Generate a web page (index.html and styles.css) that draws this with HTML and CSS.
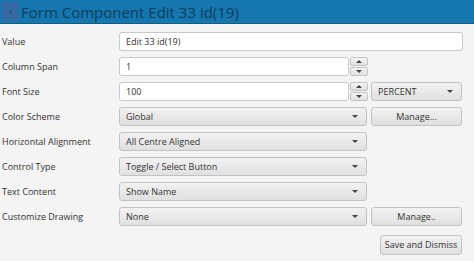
FILE: index.html
```html
<!DOCTYPE html>
<html>
<head>
<meta charset="utf-8">
<link rel="stylesheet" href="styles.css">
</head>
<body>
<div class="header">
  <div class="back">&lsaquo;</div>
  <div class="title">Form Component Edit 33 id(19)</div>
</div>
<div class="form">
  <div class="row">
    <div class="label">Value</div>
    <div class="text wide">Edit 33 id(19)</div>
  </div>
  <div class="row">
    <div class="label">Column Span</div>
    <div class="text spin">1</div>
    <div class="spinner"><div class="sbtn"><span class="up"></span></div><div class="sbtn"><span class="down"></span></div></div>
  </div>
  <div class="row">
    <div class="label">Font Size</div>
    <div class="text spin">100</div>
    <div class="spinner"><div class="sbtn"><span class="up"></span></div><div class="sbtn"><span class="down"></span></div></div>
    <div class="combo side">PERCENT<span class="arrow"></span></div>
  </div>
  <div class="row">
    <div class="label">Color Scheme</div>
    <div class="combo main">Global<span class="arrow"></span></div>
    <div class="btn side">Manage...</div>
  </div>
  <div class="row">
    <div class="label">Horizontal Alignment</div>
    <div class="combo main">All Centre Aligned<span class="arrow"></span></div>
  </div>
  <div class="row">
    <div class="label">Control Type</div>
    <div class="combo main">Toggle / Select Button<span class="arrow"></span></div>
  </div>
  <div class="row">
    <div class="label">Text Content</div>
    <div class="combo main">Show Name<span class="arrow"></span></div>
  </div>
  <div class="row">
    <div class="label">Customize Drawing</div>
    <div class="combo main">None<span class="arrow"></span></div>
    <div class="btn side">Manage..</div>
  </div>
  <div class="footer">
    <div class="btn save">Save and Dismiss</div>
  </div>
</div>
</body>
</html>
```
FILE: styles.css
```css
html, body {
  margin: 0;
  padding: 0;
  width: 474px;
  height: 261px;
  overflow: hidden;
  background: #f4f4f4;
  font-family: "Open Sans", "Liberation Sans", sans-serif;
  font-size: 9px;
  color: #333;
}
.header {
  height: 24px;
  background: #1577ae;
  border-bottom: 1px solid #0f5f8c;
  display: flex;
  align-items: center;
  box-sizing: border-box;
}
.back {
  width: 17px;
  height: 19px;
  margin-left: 2px;
  background: #3569a4;
  color: #0d3b5c;
  font-size: 10px;
  line-height: 18px;
  text-align: center;
}
.title {
  margin-left: 2px;
  font-size: 15px;
  color: #103d5e;
  line-height: 24px;
  white-space: nowrap;
}
.form {
  padding-top: 8px;
  display: flex;
  flex-direction: column;
  gap: 6px;
}
.row {
  display: flex;
  align-items: center;
  height: 19px;
}
.label {
  width: 117px;
  padding-left: 2px;
  color: #333;
  white-space: nowrap;
}
.text {
  height: 19px;
  box-sizing: border-box;
  background: #fff;
  border: 1px solid #c9c9c9;
  border-radius: 3px;
  padding-left: 6px;
  line-height: 17px;
  color: #333;
}
.wide { width: 344px; }
.spin { width: 230px; }
.spinner {
  margin-left: 1px;
  width: 18px;
  height: 19px;
  display: flex;
  flex-direction: column;
  gap: 1px;
}
.sbtn {
  flex: 1;
  background: linear-gradient(#f3f3f3, #e1e1e1);
  border: 1px solid #c4c4c4;
  border-radius: 2px;
  display: flex;
  align-items: center;
  justify-content: center;
}
.up, .down {
  width: 0;
  height: 0;
  border-left: 3px solid transparent;
  border-right: 3px solid transparent;
}
.up { border-bottom: 3px solid #444; }
.down { border-top: 3px solid #444; }
.combo, .btn {
  height: 19px;
  box-sizing: border-box;
  background: linear-gradient(#f2f2f2, #e0e0e0);
  border: 1px solid #c2c2c2;
  border-radius: 3px;
  line-height: 17px;
  color: #333;
  white-space: nowrap;
}
.combo {
  position: relative;
  padding-left: 6px;
}
.arrow {
  position: absolute;
  right: 8px;
  top: 7px;
  width: 0;
  height: 0;
  border-left: 3px solid transparent;
  border-right: 3px solid transparent;
  border-top: 3px solid #444;
}
.main { width: 248px; }
.side {
  width: 91px;
  margin-left: 4px;
}
.spinner + .side { margin-left: 3px; }
.btn { text-align: center; }
.footer {
  display: flex;
  justify-content: flex-end;
  padding-right: 12px;
  margin-top: 3px;
}
.save {
  width: 82px;
  height: 20px;
  line-height: 18px;
}
```
